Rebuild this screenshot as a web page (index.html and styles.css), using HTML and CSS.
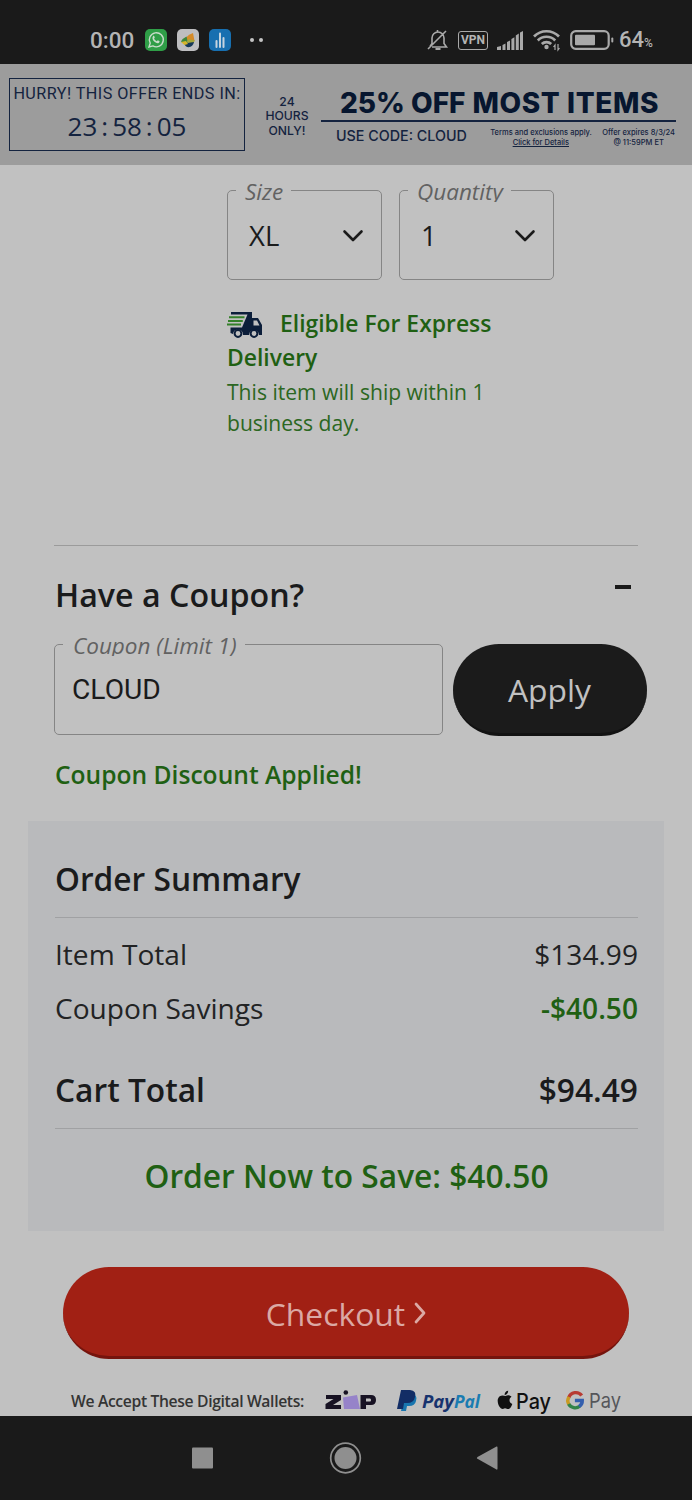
FILE: index.html
```
<!DOCTYPE html>
<html lang="en">
<head>
<meta charset="utf-8">
<title>Cart</title>
<link rel="stylesheet" href="styles.css">
</head>
<body>
<header class="status">
  <div class="status-left">
    <span class="clock">0:00</span>
    <svg class="app" viewBox="0 0 22 22"><rect width="22" height="22" rx="5" fill="#2f9e47"/><path d="M4 18l1.2-3.8a7 7 0 1 1 2.700 2.700z" fill="none" stroke="#c9dccb" stroke-width="1.400"/><path d="M8 7.200c.7-.9 1.300-.3 1.800 1.300l-.7 1c.5 1.300 1.400 2.100 2.700 2.700l1-.9c1.500.6 2 .9 1.700 1.600-.8 1.800-3 1.500-5-.1-2-1.700-2.600-4-1.500-5.600z" fill="#c9dccb"/></svg>
    <svg class="app" viewBox="0 0 22 22"><rect width="22" height="22" rx="5" fill="#bebec0"/><path d="M8.500 9Q12 5 16 4l1.500 8H9z" fill="#d58b29"/><path d="M4 12.500Q6 9 9.500 7.500L11 14H6z" fill="#3d873c"/><path d="M11 10l7 1.500-2 3-6-1z" fill="#a6a73a"/><path d="M7 14.500l10-1.500q-1 5-5.500 5.200Q8.500 18 7 14.500z" fill="#16395a"/><path d="M4 13l5-1 2 3-3.500 1z" fill="#d7b52a"/></svg>
    <svg class="app" viewBox="0 0 22 22"><rect width="22" height="22" rx="5" fill="#176fb0"/><path d="M7.500 12v6M11 4.500V18M14.500 9v9" stroke="#c4d3df" stroke-width="2" stroke-linecap="round"/></svg>
    <svg class="dots" viewBox="0 0 16 6"><circle cx="3" cy="3" r="2" fill="#c4c4c4"/><circle cx="12" cy="3" r="2" fill="#c4c4c4"/></svg>
  </div>
  <div class="status-right">
    <svg class="bell" viewBox="0 0 22 22" fill="none" stroke="#a9a9a9" stroke-width="1.600"><path d="M3 17.500l2-3V9a6 6 0 0 1 12 0v5.500l2.500 3.500H5M10.500 1v2M1 20L19 2"/><path d="M8.500 20h5" stroke-width="2"/></svg>
    <span class="vpn">VPN</span>
    <svg class="signal" viewBox="0 0 26 19" fill="#a9a9a9"><path d="M0 19v-3l4-1v4zM5.500 14l3-1.500V19h-3zM10 11l3-1.500V19h-3zM14.400 8l3-1.800V19h-3zM18.800 4.500l3-2V19h-3zM23 1.500L26 0v19h-3z"/></svg>
    <svg class="wifi" viewBox="0 0 27 22" fill="none" stroke="#a9a9a9" stroke-width="2.700"><path d="M1 7.500a17.500 17.500 0 0 1 25 0M4.800 11.500a12 12 0 0 1 17.400 0M8.800 15a6.700 6.700 0 0 1 9.400 0"/><circle cx="13.500" cy="18" r="2.200" fill="#a9a9a9" stroke="none"/><path d="M22 21v-5l-1.500 2M25 15v6l1.500-2" stroke-width="1.200"/></svg>
    <svg class="battery" viewBox="0 0 44 20"><rect x="1.200" y="1.200" width="37.500" height="17.600" rx="4.500" fill="none" stroke="#a9a9a9" stroke-width="2.200"/><rect x="5" y="4.800" width="20" height="10.400" rx="1" fill="#a9a9a9"/><rect x="41.300" y="7.500" width="2" height="5" rx="1" fill="#a9a9a9"/></svg>
    <span class="percent">64<small>%</small></span>
  </div>
</header>

<section class="banner">
  <div class="timer">
    <div class="timer-label">HURRY! THIS OFFER ENDS IN:</div>
    <div class="timer-value">23<i>:</i>58<i>:</i>05</div>
  </div>
  <div class="hours">24<br>HOURS<br>ONLY!</div>
  <div class="promo">
    <div class="promo-title"><span class="off">25% OFF</span><span class="most">MOST ITEMS</span></div>
    <div class="promo-row">
      <span class="code">USE CODE: CLOUD</span>
      <span class="terms">Terms and exclusions apply.<br><u>Click for Details</u></span>
      <span class="expires">Offer expires 8/3/24<br>@ 11:59PM ET</span>
    </div>
  </div>
</section>

<main>
  <section class="item">
    <div class="selects">
      <fieldset class="field"><legend class="l-size">Size</legend><div class="select"><span>XL</span><svg class="chev" viewBox="0 0 20 12"><path d="M1.500 1.500L10 10l8.500-8.500" fill="none" stroke="#1a1a1a" stroke-width="2.600" stroke-linecap="round" stroke-linejoin="round"/></svg></div></fieldset>
      <fieldset class="field"><legend class="l-qty">Quantity</legend><div class="select"><span>1</span><svg class="chev" viewBox="0 0 20 12"><path d="M1.500 1.500L10 10l8.500-8.500" fill="none" stroke="#1a1a1a" stroke-width="2.600" stroke-linecap="round" stroke-linejoin="round"/></svg></div></fieldset>
    </div>
    <div class="express">
      <svg class="truck" viewBox="0 0 35 26"><path d="M4 0H25V6H31L35 13V23H32A5 5 0 0 0 22 23H16A5 5 0 0 0 6 22L3.500 21V15.500H15L20.500 2.500H4z" fill="#0c1e3a"/><path d="M26.500 8.500H30l2.500 5h-6z" fill="#c1c1c1"/><path d="M2 5.200H17.500M1 8.900H15.800M0 12.600H14" stroke="#34802a" stroke-width="2"/><circle cx="11" cy="21.500" r="3.400" fill="#c1c1c1" stroke="#0c1e3a" stroke-width="2"/><circle cx="27" cy="21.500" r="3.400" fill="#c1c1c1" stroke="#0c1e3a" stroke-width="2"/></svg><span class="e1">Eligible For Express</span> <span class="e2">Delivery</span>
    </div>
    <div class="ship">This item will ship within 1<br>business day.</div>
  </section>

  <section class="coupon">
    <div class="coupon-head"><h2>Have a Coupon?</h2><span class="minus"></span></div>
    <div class="coupon-form">
      <fieldset class="field code-field"><legend class="l-coupon">Coupon (Limit 1)</legend><div class="code-value">CLOUD</div></fieldset>
      <button class="apply">Apply</button>
    </div>
    <div class="applied">Coupon Discount Applied!</div>
  </section>

  <section class="summary">
    <h2 class="s-title">Order Summary</h2>
    <div class="row"><span class="r1">Item Total</span><span class="r2">$134.99</span></div>
    <div class="row"><span class="r3">Coupon Savings</span><span class="saving">-$40.50</span></div>
    <div class="row total"><span class="t1">Cart Total</span><span class="t2">$94.49</span></div>
    <div class="save">Order Now to Save: $40.50</div>
  </section>

  <button class="checkout"><span>Checkout</span><svg class="go" viewBox="0 0 12 22"><path d="M2 2l8 9-8 9" fill="none" stroke="#dba9a4" stroke-width="2.700" stroke-linecap="round" stroke-linejoin="round"/></svg></button>

  <section class="wallets">
    <span class="w-label">We Accept These Digital Wallets:</span>
    <svg class="logos" viewBox="0 0 300 30">
      <path d="M0 9h15v5l-8 5h8v4H-.5v-5l8-5H0z" fill="#171223"/><path d="M17 11.500L31 9l3 14H18z" fill="#9683c9"/><circle cx="19.800" cy="6.500" r="2.300" fill="#171223"/><path d="M34.500 9H45q5 0 5 5t-5 5h-5v4h-5.500zM40 12.500v3h4q1 0 1-1.500t-1-1.500z" fill="#171223" fill-rule="evenodd"/>
      <path d="M79 8h6q7 0 5 7-1 5-7 5h-2l-1 5h-5z" fill="#1875ae"/><path d="M75 4h9q7 1 5 7-1 6-8 6h-3l-1 6h-6z" fill="#122d65"/>
      <g font-family="Open Sans, sans-serif" font-size="18" font-weight="700" font-style="italic"><text x="96" y="22" textLength="32" lengthAdjust="spacingAndGlyphs" fill="#17336e">Pay</text><text x="128" y="22" textLength="26" lengthAdjust="spacingAndGlyphs" fill="#1a7cb1">Pal</text></g>
      <path d="M179.500 9c2-1.200 4.500-1 6 .8-3 2-2.500 6 .8 7.200-1 3.500-3 5.500-5 4.900-2-.8-2.600-.8-4.400 0-3.500 0-6-6.500-5-10 1-3.500 4.500-4.200 7.600-2.900zM178.600 8c0-2.600 1.600-4.200 3.600-4.300 0 2.600-1.700 4.200-3.600 4.300z" fill="#101010" transform="translate(0 1)"/>
      <text x="190" y="22.500" font-family="Inter, sans-serif" font-size="22" font-weight="500" textLength="35" lengthAdjust="spacingAndGlyphs" fill="#101010">Pay</text>
      <g fill="none" stroke-width="3.300" transform="translate(-11.500 1) scale(1.050 1)"><path d="M254.500 8.500a7 7 0 0 0-12.300 2" stroke="#b83b33"/><path d="M242.400 10a7 7 0 0 0 0 7.500" stroke="#c99a22"/><path d="M242.100 17a7 7 0 0 0 10.500 2.300" stroke="#338448"/><path d="M252 19.500a7 7 0 0 0 3-6h-7" stroke="#345fae"/></g>
      <text x="263" y="22" font-family="Inter, sans-serif" font-size="20.500" textLength="32" lengthAdjust="spacingAndGlyphs" fill="#55565a">Pay</text>
    </svg>
  </section>
</main>

<nav class="nav">
  <svg viewBox="0 0 316 32" fill="#8f8f8f"><rect x="0" y="5.500" width="21" height="21" rx="1"/><circle cx="153.500" cy="16" r="14.800" fill="none" stroke="#8f8f8f" stroke-width="1.700"/><circle cx="153.500" cy="16" r="11"/><path d="M285 16.500Q284.500 16 285.500 15L304.500 4.500Q305.500 4 305.500 5.500V26.500Q305.500 28 304.500 27.500z"/></svg>
</nav>
</body>
</html>
```
FILE: styles.css
```
* { box-sizing: border-box; }
body { margin: 0; width: 692px; height: 1500px; overflow: hidden; background: #c1c1c1; color: #1a1b1c; font-family: "Open Sans", sans-serif; display: flex; flex-direction: column; }
h2 { margin: 0; font-weight: 600; }
button { border: 0; margin: 0; padding: 0; font-family: inherit; }
svg { display: block; flex: none; overflow: visible; }
span { white-space: nowrap; }

.status { height: 64px; flex: none; background: #1a1a1a; display: flex; justify-content: space-between; padding: 16px 39px 0 90px; color: #b4b4b4; }
.status-left, .status-right { display: flex; align-items: center; height: 48px; }
.clock { font-family: Roboto, sans-serif; font-weight: 500; font-size: 22.500px; line-height: 30px; width: 54.500px; }
.app { width: 22px; height: 22px; margin-right: 10px; }
.dots { width: 16px; height: 6px; margin-left: 8px; }
.bell { width: 22px; height: 22px; margin-right: 9px; }
.vpn { width: 30px; height: 19px; border: 1.500px solid #a9a9a9; border-radius: 3px; font: 700 12px/17px Roboto, sans-serif; text-align: center; margin-right: 9px; }
.signal { width: 26px; height: 19px; margin-right: 10px; }
.wifi { width: 27px; height: 22px; margin-right: 10px; }
.battery { width: 44px; height: 20px; margin-right: 5px; }
.percent { font: 500 22px/30px Roboto, sans-serif; width: 34px; padding-top: 2px; }
.percent small { font-size: 12px; }

.banner { height: 101px; flex: none; background: #9c9c9c; color: #14233f; display: flex; font-family: Inter, sans-serif; padding-left: 9px; }
.timer { margin-top: 14px; width: 236px; height: 73px; border: 1.500px solid #14233f; text-align: center; white-space: nowrap; }
.timer-label { font: 400 16.200px/24px Roboto, sans-serif; letter-spacing: 0.450px; margin-top: 3px; }
.timer-value { font: 400 26px/40px "Open Sans", sans-serif; }
.timer-value i { font-style: normal; padding: 0 4px; }
.hours { width: 60px; margin: 31px 0 0 12px; text-align: center; font-size: 12.200px; line-height: 14.400px; font-weight: 500; }
.promo { margin-left: 4px; width: 355px; padding-top: 20px; }
.promo-title { height: 38px; border-bottom: 2px solid #14233f; line-height: 38px; font-size: 28px; font-weight: 800; color: #07162f; padding-left: 19px; display: flex; gap: 7px; white-space: nowrap; }
.most { letter-spacing: 0.600px; }
.promo-row { display: flex; }
.code { margin: 5px 0 0 15px; width: 157px; font-size: 14.300px; font-weight: 500; line-height: 18px; }
.terms, .expires { font-size: 7.500px; line-height: 9.500px; margin-top: 6px; text-align: center; font-weight: 500; }
.terms { width: 101px; }
.expires { width: 76px; margin-left: 10px; }

main { height: 1251px; flex: none; display: flex; flex-direction: column; }
.item { margin-left: 227px; height: 380px; padding-top: 13px; width: 340px; }
.selects { display: flex; gap: 17px; }
.field { margin: 0; padding: 0; min-width: 0; width: 155px; height: 102px; border: 1.500px solid #858585; border-radius: 5px; }
.field legend { height: 24px; line-height: 28px; overflow: hidden; margin-left: 8px; padding: 0 8px 0 9px; font-size: 22.500px; font-style: italic; color: #626262; white-space: nowrap; }
.select { display: flex; justify-content: space-between; align-items: center; padding: 0 18px 0 21px; height: 67px; font-size: 27.500px; }
.chev { width: 20px; height: 12px; }
.express { margin-top: 27px; width: 290px; color: #1f6013; font-weight: 600; font-size: 22.900px; line-height: 34px; }
.truck { display: inline-block; width: 35px; height: 26px; vertical-align: -6px; margin-right: 18px; }
.ship { color: #2c6722; font-size: 21.100px; line-height: 31px; margin-top: 1px; white-space: nowrap; }

.coupon { margin: 0 54px; width: 593px; height: 276px; }
.coupon-head { width: 584px; border-top: 1.500px solid #9b9b9b; height: 87px; display: flex; justify-content: space-between; padding: 0 7px 0 1px; }
.coupon-head h2 { font-size: 32.200px; line-height: 44px; margin-top: 27px; }
.minus { width: 16px; height: 4px; background: #1a1a1a; margin-top: 39px; }
.coupon-form { display: flex; gap: 9.500px; }
.code-field { width: 389px; height: 103px; }
.code-field legend { padding-left: 10px; }
.code-value { font: 400 28.200px/68px Roboto, sans-serif; padding-left: 17px; }
.apply { margin-top: 12px; width: 194px; height: 92px; border-radius: 46px; background: #1b1b1b; color: #c1c1c1; font-size: 31.800px; border-bottom: 3px solid #121212; padding-top: 1px; }
.applied { color: #1f6013; font-weight: 600; font-size: 24.600px; line-height: 34px; margin: 22px 0 0 1px; }

.summary { margin-left: 28px; width: 636px; height: 410px; background: #b9babc; padding: 35px 26px 0 27px; }
.s-title { height: 62px; border-bottom: 1.500px solid #a0a1a3; font-size: 31.700px; line-height: 46px; }
.row { display: flex; justify-content: space-between; line-height: 40px; margin-top: 16px; height: 40px; font-size: 28.100px; color: #222324; }
.row + .row { margin-top: 14px; }
.saving { font-weight: 600; color: #1f6013; }
.row.row.total { margin-top: 37px; height: 64px; border-bottom: 1.500px solid #a0a1a3; font-size: 31.700px; line-height: 50px; font-weight: 600; color: #1a1b1c; }
.save { color: #1f6013; text-align: center; font-weight: 600; font-size: 31.700px; line-height: 44px; margin-top: 25px; }

.checkout { margin: 36px 0 0 63px; width: 566px; height: 92px; flex: none; border-radius: 46px; background: #a12014; border-bottom: 3px solid #75140d; color: #dba9a4; font-size: 31.800px; display: flex; justify-content: center; align-items: center; gap: 9px; padding-top: 3px; }
.go { width: 12px; height: 22px; }
.wallets { display: flex; padding-left: 71px; margin-top: 27px; height: 30px; }
.w-label { font-size: 15.700px; line-height: 31px; font-weight: 600; letter-spacing: -0.350px; color: #343434; width: 255px; }
.logos { width: 300px; height: 30px; }
.nav { height: 84px; flex: none; background: #1a1a1a; padding: 26px 0 0 192px; }
.nav svg { width: 316px; height: 32px; }
```
